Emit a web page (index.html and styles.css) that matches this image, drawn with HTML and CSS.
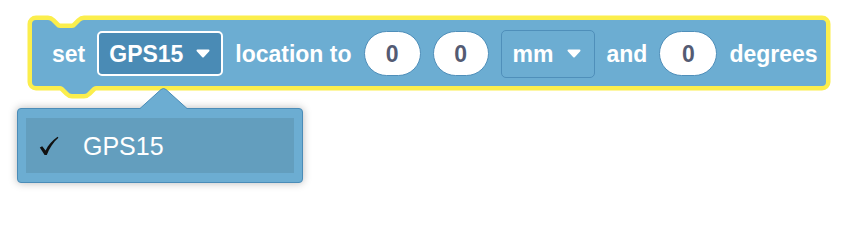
FILE: index.html
```html
<!DOCTYPE html>
<html>
<head>
<meta charset="utf-8">
<link rel="stylesheet" href="styles.css">
</head>
<body>
<div class="stage">
  <div class="block">
    <svg class="block-shape" width="794" height="66" viewBox="0 0 794 66">
      <path d="M0,4 A4,4 0 0 1 4,0 H16 c2,0 3,1 4,2 l4,4 c1,1 2,2 4,2 h12 c2,0 3,-1 4,-2 l4,-4 c1,-1 2,-2 4,-2 H790 a4,4 0 0 1 4,4 V62 a4,4 0 0 1 -4,4 H64 c-2,0 -3,1 -4,2 l-4,4 c-1,1 -2,2 -4,2 h-12 c-2,0 -3,-1 -4,-2 l-4,-4 c-1,-1 -2,-2 -4,-2 H4 a4,4 0 0 1 -4,-4 Z" fill="#6cadd2" stroke="#fbee4c" stroke-width="9" paint-order="stroke" stroke-linejoin="round"/>
    </svg>
    <div class="row">
      <span class="label">set</span>
      <div class="dropdown selected">
        <span class="dd-text">GPS15</span>
        <svg class="caret" width="14" height="9" viewBox="0 0 14 9"><path d="M1.5 1.5 H12.5 L7 7.5 Z" fill="#fff" stroke="#fff" stroke-width="2" stroke-linejoin="round"/></svg>
      </div>
      <span class="label">location to</span>
      <div class="oval w57">0</div>
      <div class="oval w56">0</div>
      <div class="dropdown unit">
        <span class="dd-text">mm</span>
        <svg class="caret" width="14" height="9" viewBox="0 0 14 9"><path d="M1.5 1.5 H12.5 L7 7.5 Z" fill="#fff" stroke="#fff" stroke-width="2" stroke-linejoin="round"/></svg>
      </div>
      <span class="label">and</span>
      <div class="oval w58">0</div>
      <span class="label">degrees</span>
    </div>
  </div>

  <div class="menu">
    <svg class="menu-arrow" width="47" height="22" viewBox="0 0 47 22">
      <path d="M0,20.5 L21,1.5 Q23.5,-0.5 26,1.5 L47,20.5 V22 H0 Z" fill="#6cadd2"/>
      <path d="M0,20.5 L21,1.5 Q23.5,-0.5 26,1.5 L47,20.5" fill="none" stroke="#4a8cb8" stroke-width="1"/>
    </svg>
    <div class="menu-item">
      <svg class="check" width="20" height="20" viewBox="0 0 20 20">
        <path d="M0.8,11.6 L3.2,10.2 L6.6,14.6 C9.2,9.2 13.2,4.4 18.6,0.8 L19.4,1.8 C14.4,6.2 10.4,12.2 7.8,19 L5.6,19 Z" fill="#111"/>
      </svg>
      <span class="item-text">GPS15</span>
    </div>
  </div>
</div>
</body>
</html>
```

FILE: styles.css
```css
html, body {
  margin: 0;
  padding: 0;
  background: #ffffff;
}

.stage {
  position: relative;
  width: 846px;
  height: 204px;
  padding: 20px 0 0 32px;
  box-sizing: border-box;
  font-family: "Liberation Sans", Arial, sans-serif;
}

.block {
  position: relative;
  width: 794px;
  height: 66px;
}

.block-shape {
  position: absolute;
  left: 0;
  top: 0;
  overflow: visible;
}

.row {
  position: relative;
  display: flex;
  align-items: center;
  gap: 12px;
  height: 66px;
  padding-left: 20px;
  padding-top: 1px;
  box-sizing: border-box;
}

.label {
  color: #ffffff;
  font-weight: bold;
  font-size: 23px;
  line-height: 26px;
  white-space: nowrap;
}

.dropdown {
  display: flex;
  align-items: center;
  justify-content: space-between;
  box-sizing: border-box;
  color: #ffffff;
  font-weight: bold;
  font-size: 23px;
  line-height: 26px;
}

.dropdown.selected {
  width: 126px;
  height: 45px;
  background: #4a8bb5;
  border: 2px solid #ffffff;
  border-radius: 5px;
  padding: 0 11px 0 10px;
}

.dropdown.unit {
  width: 94px;
  height: 48px;
  background: #6cadd2;
  border: 1px solid #4f8fba;
  border-radius: 5px;
  padding: 0 13px 0 11px;
}

.caret {
  display: block;
}

.oval {
  height: 45px;
  box-sizing: border-box;
  border-radius: 23px;
  background: #ffffff;
  border: 1px solid #4f8fba;
  display: flex;
  align-items: center;
  justify-content: center;
  color: #545b73;
  font-weight: bold;
  font-size: 23px;
  line-height: 26px;
}

.w57 { width: 57px; }
.w56 { width: 56px; }
.w58 { width: 58px; }

.menu {
  position: absolute;
  left: 17px;
  top: 108px;
  width: 286px;
  height: 75px;
  box-sizing: border-box;
  background: #6cadd2;
  border: 1px solid #4a8cb8;
  border-radius: 4px;
  box-shadow: 0 0 8px rgba(0, 0, 0, 0.28);
  padding: 9px 8px 9px 8px;
}

.menu-arrow {
  position: absolute;
  left: 122px;
  top: -21px;
  display: block;
}

.menu-item {
  height: 55px;
  background: #639ebe;
  display: flex;
  align-items: center;
  padding-left: 13px;
}

.check {
  display: block;
  margin-top: 1px;
}

.item-text {
  margin-left: 24px;
  color: #ffffff;
  font-size: 25px;
  line-height: 28px;
  font-weight: normal;
}
```
